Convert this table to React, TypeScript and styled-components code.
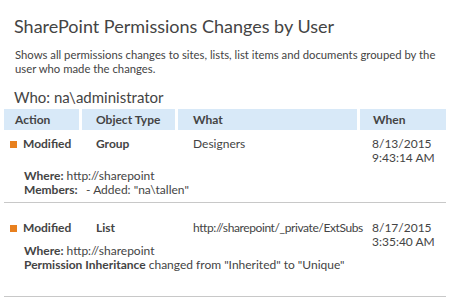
import React from "react";
import styled, { createGlobalStyle } from "styled-components";

const Global = createGlobalStyle`
  html, body { margin: 0; padding: 0; background: #ffffff; }
  body { font-family: Lato, "Open Sans", sans-serif; color: #444444; }
`;

const Page = styled.div`
  width: 450px;
  height: 300px;
  overflow: hidden;
  box-sizing: border-box;
`;

const Title = styled.h1`
  margin: 14px 0 0 14px;
  font-size: 18px;
  line-height: 24px;
  font-weight: 400;
  color: #444444;
  white-space: nowrap;
`;

const Description = styled.p`
  margin: 10px 8px 0 15px;
  font-size: 11.3px;
  line-height: 13.5px;
  color: #444444;
`;

const Who = styled.h2`
  margin: 13px 0 0 14px;
  font-size: 15px;
  line-height: 18px;
  font-weight: 400;
  color: #444444;
`;

const Table = styled.div`
  margin-top: 3px;
  padding: 0 4px;
`;

const columns = "75px 93px 179px 86px";

const HeaderRow = styled.div`
  display: grid;
  grid-template-columns: ${columns};
  column-gap: 3px;
  height: 21px;
`;

const HeaderCell = styled.div<{ $pad: number }>`
  background: #d8e9f8;
  display: flex;
  align-items: center;
  padding-left: ${(p) => p.$pad}px;
  font-size: 12px;
  font-weight: 700;
  color: #444444;
  white-space: nowrap;
`;

const Record = styled.div<{ $top: number; $bottom: number }>`
  display: grid;
  grid-template-columns: ${columns};
  grid-template-rows: auto auto;
  column-gap: 3px;
  padding: ${(p) => p.$top}px 0 ${(p) => p.$bottom}px;
  border-bottom: 1px solid #c8c8c8;
  font-size: 12px;
  line-height: 14px;
  color: #444444;
`;

const Cell = styled.div<{ $pad: number; $bold?: boolean; $tight?: boolean }>`
  grid-row: 1;
  padding-left: ${(p) => p.$pad}px;
  font-weight: ${(p) => (p.$bold ? 700 : 400)};
  letter-spacing: ${(p) => (p.$tight ? "-0.4px" : "normal")};
  white-space: nowrap;
  min-width: 0;
`;

const ActionCell = styled(Cell)`
  display: flex;
  align-items: center;
`;

const Square = styled.span`
  display: inline-block;
  width: 7px;
  height: 7px;
  background: #e8801e;
  margin-right: 6px;
`;

const WhenCell = styled(Cell)`
  grid-column: 4;
  grid-row: 1 / span 2;
`;

const Details = styled.div<{ $gap: number }>`
  grid-column: 1 / 4;
  grid-row: 2;
  margin-top: ${(p) => p.$gap}px;
  padding-left: 20px;
  white-space: nowrap;
`;

const Label = styled.span`
  font-weight: 700;
`;

const FixedLabel = styled.span`
  display: inline-block;
  width: 62px;
  font-weight: 700;
`;

type Row = {
  type: string;
  what: string;
  url?: boolean;
  date: string;
  time: string;
  top: number;
  bottom: number;
  gap: number;
  details: React.ReactNode;
};

const rows: Row[] = [
  {
    type: "Group",
    what: "Designers",
    date: "8/13/2015",
    time: "9:43:14 AM",
    top: 7,
    bottom: 5,
    gap: 18,
    details: (
      <>
        <div>
          <Label>Where:</Label> http://sharepoint
        </div>
        <div>
          <FixedLabel>Members:</FixedLabel>- Added: "na\tallen"
        </div>
      </>
    ),
  },
  {
    type: "List",
    what: "http://sharepoint/_private/ExtSubs",
    url: true,
    date: "8/17/2015",
    time: "3:35:40 AM",
    top: 18,
    bottom: 24,
    gap: 9,
    details: (
      <>
        <div>
          <Label>Where:</Label> http://sharepoint
        </div>
        <div>
          <Label>Permission Inheritance</Label> changed from "Inherited" to "Unique"
        </div>
      </>
    ),
  },
];

export default function App() {
  return (
    <Page>
      <Global />
      <Title>SharePoint Permissions Changes by User</Title>
      <Description>
        Shows all permissions changes to sites, lists, list items and documents grouped by the
        user who made the changes.
      </Description>
      <Who>Who: na\administrator</Who>
      <Table>
        <HeaderRow>
          <HeaderCell $pad={11}>Action</HeaderCell>
          <HeaderCell $pad={14}>Object Type</HeaderCell>
          <HeaderCell $pad={15}>What</HeaderCell>
          <HeaderCell $pad={13}>When</HeaderCell>
        </HeaderRow>
        {rows.map((r, i) => (
          <Record key={i} $top={r.top} $bottom={r.bottom}>
            <ActionCell $pad={6} $bold>
              <Square />
              Modified
            </ActionCell>
            <Cell $pad={14} $bold>
              {r.type}
            </Cell>
            <Cell $pad={15} $tight={r.url}>
              {r.what}
            </Cell>
            <WhenCell $pad={12}>
              {r.date}
              <br />
              {r.time}
            </WhenCell>
            <Details $gap={r.gap}>{r.details}</Details>
          </Record>
        ))}
      </Table>
    </Page>
  );
}
